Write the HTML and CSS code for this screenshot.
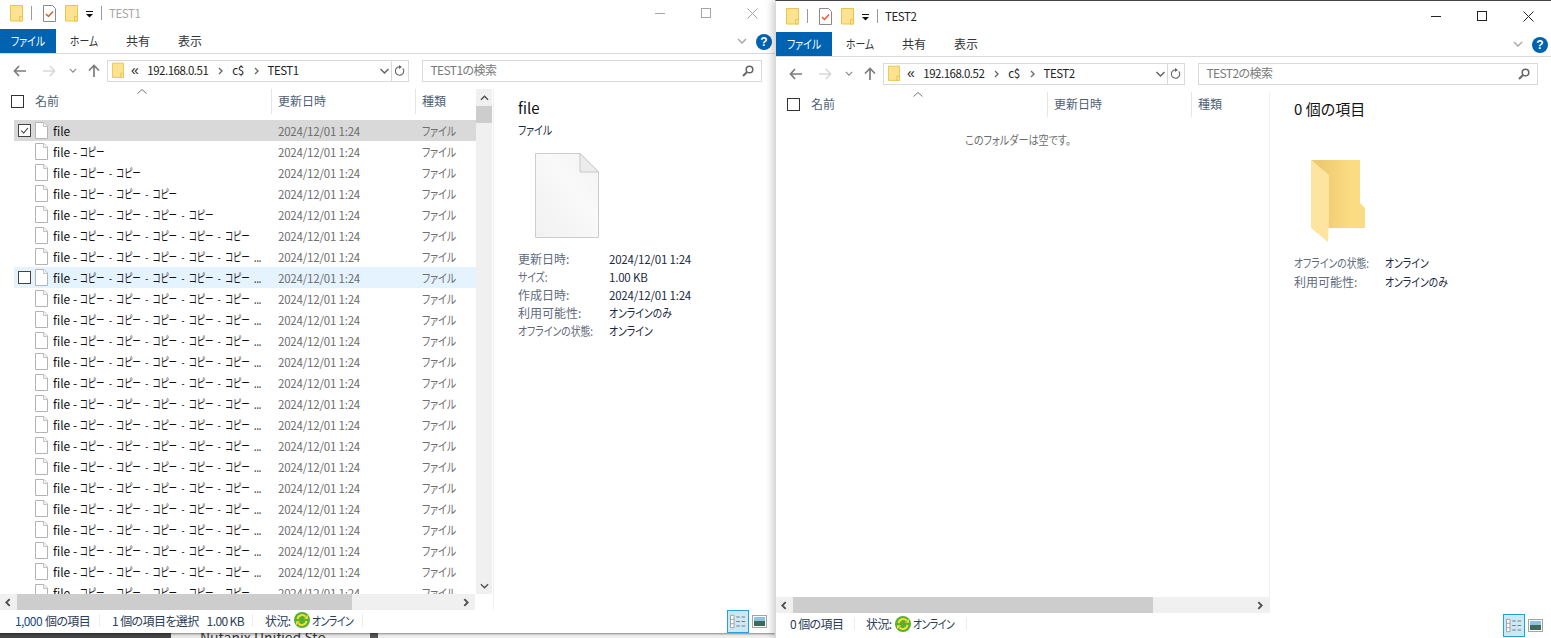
FILE: index.html
```html
<!DOCTYPE html>
<html lang="ja">
<head>
<meta charset="utf-8">
<title>TEST1 / TEST2</title>
<link rel="stylesheet" href="styles.css">
</head>
<body>
<svg class="defs" width="0" height="0">
  <defs>
    <linearGradient id="fg" x1="0" x2="1" y1="0" y2="0"><stop offset="0.2" stop-color="#edcb72"/><stop offset="0.75" stop-color="#fcdc82"/></linearGradient>
    <linearGradient id="pg" x1="0" x2="1" y1="1" y2="0"><stop offset="0" stop-color="#f1f1f1"/><stop offset="0.6" stop-color="#f9f9f9"/><stop offset="1" stop-color="#f3f3f3"/></linearGradient>
    <symbol id="folder" viewBox="0 0 13 17"><path d="M.5.5h12v15.500H.5z" fill="#fde28f" stroke="#eac44c"/><path d="M9.500 16V11.500h3V16z" fill="#fde28f" stroke="#eac44c"/></symbol>
    <symbol id="doc" viewBox="0 0 13 17"><path d="M.5.5H9L12.500 4V16.500H.5z" fill="#fff" stroke="#b4b4b4"/><path d="M8.500.5V4.500H12.500" fill="#f2f2f2" stroke="#c4c4c4"/></symbol>
    <symbol id="chev" viewBox="0 0 10 6"><path d="M1 1l4 4 4-4" fill="none" stroke="currentColor" stroke-width="1.5"/></symbol>
    <symbol id="crumb" viewBox="0 0 5 8"><path d="M1 1l3 3-3 3" fill="none" stroke="currentColor"/></symbol>
    <symbol id="online" viewBox="0 0 16 16"><circle cx="8" cy="8" r="8" fill="#58b02f"/><path d="M3.600 7.200A4.600 4.600 0 0 1 11.600 4.600" fill="none" stroke="#f2de3a" stroke-width="2"/><path d="M10 6.800h4V2.800z" fill="#f2de3a"/><path d="M12.400 8.800A4.600 4.600 0 0 1 4.400 11.400" fill="none" stroke="#f2de3a" stroke-width="2"/><path d="M6 9.200H2v4z" fill="#f2de3a"/></symbol>
    <symbol id="details" viewBox="0 0 20 17"><path d="M1.500 1.500h4v14h-4zM1.500 6h4M1.500 11h4" fill="#fff" stroke="#9a9a9a"/><path d="M8 3.500h4M14 3.500h4M8 8.500h4M14 8.500h4M8 13.500h4M14 13.500h4" stroke="#7a7a7a" stroke-width="1.2"/></symbol>
    <symbol id="photo" viewBox="0 0 15 13"><rect x=".5" y=".5" width="14" height="12" fill="#fff" stroke="#a4a4a4"/><rect x="2" y="2" width="11" height="4" fill="#8cc3e6"/><rect x="2" y="6" width="11" height="5" fill="#3f6a5a"/></symbol>
    <symbol id="quick" viewBox="0 0 13 17"><path d="M.5.5H9.500L12.500 3.500V16.500H.5z" fill="#fff" stroke="#8a8a8a"/><path d="M3 9l2.500 2.500L10 6.500" fill="none" stroke="#e8562a" stroke-width="1.500"/></symbol>
    <symbol id="mag" viewBox="0 0 12 12"><circle cx="7.500" cy="4.500" r="3.300" fill="none" stroke="#666" stroke-width="1.500"/><path d="M5 7L1 11" stroke="#666" stroke-width="2"/></symbol>
    <symbol id="back" viewBox="0 0 13 12"><path d="M6 1L1.500 6 6 11M2 6h11" fill="none" stroke="currentColor" stroke-width="1.700"/></symbol>
    <symbol id="up" viewBox="0 0 12 13"><path d="M1 6.500L6 1.500l5 5M6 2v11" fill="none" stroke="currentColor" stroke-width="1.700"/></symbol>
    <symbol id="refresh" viewBox="0 0 11 12"><path d="M8.800 3.300A4.200 4.200 0 1 1 5.500 1.800" fill="none" stroke="#666" stroke-width="1.100"/><path d="M5 0v4l3-2z" fill="#666"/></symbol>
    <symbol id="qat" viewBox="0 0 7 7"><path d="M0 .5h7" stroke="#111"/><path d="M0 3h7L3.500 6.500z" fill="#111"/></symbol>
    <symbol id="tick" viewBox="0 0 13 13"><path d="M2.500 6.500l3 3 5-6" fill="none" stroke="#333" stroke-width="1.200"/></symbol>
  </defs>
</svg>

<main class="desktop">
  <div class="behind">
    <div class="behind-dark"></div>
    <div class="behind-tab">Nutanix Unified Sto...</div>
    <div class="behind-bar"></div>
    <div class="behind-rest"></div>
  </div>

  <section class="window win-one">
    <header class="title">
      <svg class="qa-folder"><use href="#folder"/></svg><i class="qa-sep"></i>
      <svg class="qa-check"><use href="#quick"/></svg>
      <svg class="qa-folder qa-second"><use href="#folder"/></svg>
      <svg class="qa-arrow"><use href="#qat"/></svg><i class="qa-sep qa-sep2"></i>
      <span class="title-text">TEST1</span>
      <div class="controls">
        <span class="ctl"><i class="ctl-min"></i></span>
        <span class="ctl"><i class="ctl-max"></i></span>
        <span class="ctl"><svg class="ctl-x" viewBox="0 0 11 11"><path d="M.5.5l10 10M10.500.5l-10 10" stroke="currentColor"/></svg></span>
      </div>
    </header>
    <nav class="tabs">
      <span class="tab tab-file"><span class="k">ファイル</span></span><span class="tab tab-home"><span class="k">ホーム</span></span><span class="tab">共有</span><span class="tab">表示</span>
      <svg class="ribbon-chev"><use href="#chev"/></svg>
      <span class="help">?</span>
    </nav>
    <div class="nav">
      <svg class="nav-back"><use href="#back"/></svg>
      <svg class="nav-fwd"><use href="#back"/></svg>
      <svg class="nav-down"><use href="#chev"/></svg>
      <svg class="nav-up"><use href="#up"/></svg>
      <div class="addr">
        <svg class="addr-folder"><use href="#folder"/></svg>
        <span class="addr-more">«</span>
        <span>192.168.0.51</span>
        <svg class="crumb"><use href="#crumb"/></svg>
        <span>c$</span>
        <svg class="crumb"><use href="#crumb"/></svg>
        <span>TEST1</span>
        <svg class="addr-chev"><use href="#chev"/></svg>
      </div>
      <div class="refresh"><svg><use href="#refresh"/></svg></div>
      <div class="search"><span>TEST1の検索</span><svg><use href="#mag"/></svg></div>
    </div>
    <div class="body">
      <div class="pane">
        <div class="pane-top">
          <div class="main">
            <div class="head">
              <i class="box head-box"></i>
              <span class="head-name">名前</span>
              <svg class="sort" viewBox="0 0 10 5"><path d="M.5 4.500L5 .5l4.500 4" fill="none" stroke="#777"/></svg>
              <span class="head-date">更新日時</span>
              <span class="head-type">種類</span>
            </div>
            <div class="rows">
              <div class="row row-sel"><i class="box row-box"><svg><use href="#tick"/></svg></i><svg class="doc"><use href="#doc"/></svg><span class="nm">file</span><span class="dt">2024/12/01 1:24</span><span class="ty">ファイル</span></div>
              <div class="row"><i class="row-gap"></i><svg class="doc"><use href="#doc"/></svg><span class="nm">file - <span class="cp">コピー</span></span><span class="dt">2024/12/01 1:24</span><span class="ty">ファイル</span></div>
              <div class="row"><i class="row-gap"></i><svg class="doc"><use href="#doc"/></svg><span class="nm">file - <span class="cp">コピー - コピー</span></span><span class="dt">2024/12/01 1:24</span><span class="ty">ファイル</span></div>
              <div class="row"><i class="row-gap"></i><svg class="doc"><use href="#doc"/></svg><span class="nm">file - <span class="cp">コピー - コピー - コピー</span></span><span class="dt">2024/12/01 1:24</span><span class="ty">ファイル</span></div>
              <div class="row"><i class="row-gap"></i><svg class="doc"><use href="#doc"/></svg><span class="nm">file - <span class="cp">コピー - コピー - コピー - コピー</span></span><span class="dt">2024/12/01 1:24</span><span class="ty">ファイル</span></div>
              <div class="row"><i class="row-gap"></i><svg class="doc"><use href="#doc"/></svg><span class="nm">file - <span class="cp">コピー - コピー - コピー - コピー - コピー</span></span><span class="dt">2024/12/01 1:24</span><span class="ty">ファイル</span></div>
              <div class="row"><i class="row-gap"></i><svg class="doc"><use href="#doc"/></svg><span class="nm">file - <span class="cp">コピー - コピー - コピー - コピー - コピー ...</span></span><span class="dt">2024/12/01 1:24</span><span class="ty">ファイル</span></div>
              <div class="row row-hover"><i class="box row-box"></i><svg class="doc"><use href="#doc"/></svg><span class="nm">file - <span class="cp">コピー - コピー - コピー - コピー - コピー ...</span></span><span class="dt">2024/12/01 1:24</span><span class="ty">ファイル</span></div>
              <div class="row"><i class="row-gap"></i><svg class="doc"><use href="#doc"/></svg><span class="nm">file - <span class="cp">コピー - コピー - コピー - コピー - コピー ...</span></span><span class="dt">2024/12/01 1:24</span><span class="ty">ファイル</span></div>
              <div class="row"><i class="row-gap"></i><svg class="doc"><use href="#doc"/></svg><span class="nm">file - <span class="cp">コピー - コピー - コピー - コピー - コピー ...</span></span><span class="dt">2024/12/01 1:24</span><span class="ty">ファイル</span></div>
              <div class="row"><i class="row-gap"></i><svg class="doc"><use href="#doc"/></svg><span class="nm">file - <span class="cp">コピー - コピー - コピー - コピー - コピー ...</span></span><span class="dt">2024/12/01 1:24</span><span class="ty">ファイル</span></div>
              <div class="row"><i class="row-gap"></i><svg class="doc"><use href="#doc"/></svg><span class="nm">file - <span class="cp">コピー - コピー - コピー - コピー - コピー ...</span></span><span class="dt">2024/12/01 1:24</span><span class="ty">ファイル</span></div>
              <div class="row"><i class="row-gap"></i><svg class="doc"><use href="#doc"/></svg><span class="nm">file - <span class="cp">コピー - コピー - コピー - コピー - コピー ...</span></span><span class="dt">2024/12/01 1:24</span><span class="ty">ファイル</span></div>
              <div class="row"><i class="row-gap"></i><svg class="doc"><use href="#doc"/></svg><span class="nm">file - <span class="cp">コピー - コピー - コピー - コピー - コピー ...</span></span><span class="dt">2024/12/01 1:24</span><span class="ty">ファイル</span></div>
              <div class="row"><i class="row-gap"></i><svg class="doc"><use href="#doc"/></svg><span class="nm">file - <span class="cp">コピー - コピー - コピー - コピー - コピー ...</span></span><span class="dt">2024/12/01 1:24</span><span class="ty">ファイル</span></div>
              <div class="row"><i class="row-gap"></i><svg class="doc"><use href="#doc"/></svg><span class="nm">file - <span class="cp">コピー - コピー - コピー - コピー - コピー ...</span></span><span class="dt">2024/12/01 1:24</span><span class="ty">ファイル</span></div>
              <div class="row"><i class="row-gap"></i><svg class="doc"><use href="#doc"/></svg><span class="nm">file - <span class="cp">コピー - コピー - コピー - コピー - コピー ...</span></span><span class="dt">2024/12/01 1:24</span><span class="ty">ファイル</span></div>
              <div class="row"><i class="row-gap"></i><svg class="doc"><use href="#doc"/></svg><span class="nm">file - <span class="cp">コピー - コピー - コピー - コピー - コピー ...</span></span><span class="dt">2024/12/01 1:24</span><span class="ty">ファイル</span></div>
              <div class="row"><i class="row-gap"></i><svg class="doc"><use href="#doc"/></svg><span class="nm">file - <span class="cp">コピー - コピー - コピー - コピー - コピー ...</span></span><span class="dt">2024/12/01 1:24</span><span class="ty">ファイル</span></div>
              <div class="row"><i class="row-gap"></i><svg class="doc"><use href="#doc"/></svg><span class="nm">file - <span class="cp">コピー - コピー - コピー - コピー - コピー ...</span></span><span class="dt">2024/12/01 1:24</span><span class="ty">ファイル</span></div>
              <div class="row"><i class="row-gap"></i><svg class="doc"><use href="#doc"/></svg><span class="nm">file - <span class="cp">コピー - コピー - コピー - コピー - コピー ...</span></span><span class="dt">2024/12/01 1:24</span><span class="ty">ファイル</span></div>
              <div class="row"><i class="row-gap"></i><svg class="doc"><use href="#doc"/></svg><span class="nm">file - <span class="cp">コピー - コピー - コピー - コピー - コピー ...</span></span><span class="dt">2024/12/01 1:24</span><span class="ty">ファイル</span></div>
              <div class="row"><i class="row-gap"></i><svg class="doc"><use href="#doc"/></svg><span class="nm">file - <span class="cp">コピー - コピー - コピー - コピー - コピー ...</span></span><span class="dt">2024/12/01 1:24</span><span class="ty">ファイル</span></div>
            </div>
          </div>
          <div class="vscroll">
            <svg class="vs-up"><use href="#chev"/></svg>
            <i class="vs-thumb"></i>
            <svg class="vs-down"><use href="#chev"/></svg>
          </div>
        </div>
        <div class="hscroll hs-one">
          <svg class="hs-l"><use href="#crumb"/></svg>
          <i class="hs-thumb hs-thumb-one"></i>
          <svg class="hs-r"><use href="#crumb"/></svg>
        </div>
      </div>
      <aside class="preview">
        <h2 class="pv-title">file</h2>
        <div class="pv-sub"><span class="k">ファイル</span></div>
        <svg class="pv-doc" viewBox="0 0 64 85"><path d="M.5.5H45L63.500 19V84.500H.5z" fill="url(#pg)" stroke="#cdcdcd"/><path d="M45 .5V19H63.500z" fill="#ececec" stroke="#c8c8c8"/></svg>
        <dl class="props">
          <dt>更新日時:</dt><dd class="num">2024/12/01 1:24</dd>
          <dt><span class="k">サイズ:</span></dt><dd class="num">1.00 KB</dd>
          <dt>作成日時:</dt><dd class="num">2024/12/01 1:24</dd>
          <dt>利用可能性:</dt><dd><span class="k">オンラインのみ</span></dd>
          <dt><span class="k">オフラインの状態:</span></dt><dd><span class="k">オンライン</span></dd>
        </dl>
      </aside>
    </div>
    <footer class="status">
      <span class="st st-count"><b>1,000</b> 個の項目</span>
      <span class="st st-sel">1 個の項目を選択<em>1.00 KB</em></span>
      <span class="st st-online">状況:<svg class="ol"><use href="#online"/></svg><span class="k">オンライン</span></span>
      <div class="views">
        <span class="view-on"><svg><use href="#details"/></svg></span>
        <svg class="view-off"><use href="#photo"/></svg>
      </div>
    </footer>
  </section>

  <section class="window win-two">
    <header class="title">
      <svg class="qa-folder"><use href="#folder"/></svg><i class="qa-sep"></i>
      <svg class="qa-check"><use href="#quick"/></svg>
      <svg class="qa-folder qa-second"><use href="#folder"/></svg>
      <svg class="qa-arrow"><use href="#qat"/></svg><i class="qa-sep qa-sep2"></i>
      <span class="title-text">TEST2</span>
      <div class="controls">
        <span class="ctl"><i class="ctl-min"></i></span>
        <span class="ctl"><i class="ctl-max"></i></span>
        <span class="ctl"><svg class="ctl-x" viewBox="0 0 11 11"><path d="M.5.5l10 10M10.500.5l-10 10" stroke="currentColor"/></svg></span>
      </div>
    </header>
    <nav class="tabs">
      <span class="tab tab-file"><span class="k">ファイル</span></span><span class="tab tab-home"><span class="k">ホーム</span></span><span class="tab">共有</span><span class="tab">表示</span>
      <svg class="ribbon-chev"><use href="#chev"/></svg>
      <span class="help">?</span>
    </nav>
    <div class="nav">
      <svg class="nav-back"><use href="#back"/></svg>
      <svg class="nav-fwd"><use href="#back"/></svg>
      <svg class="nav-down"><use href="#chev"/></svg>
      <svg class="nav-up"><use href="#up"/></svg>
      <div class="addr">
        <svg class="addr-folder"><use href="#folder"/></svg>
        <span class="addr-more">«</span>
        <span>192.168.0.52</span>
        <svg class="crumb"><use href="#crumb"/></svg>
        <span>c$</span>
        <svg class="crumb"><use href="#crumb"/></svg>
        <span>TEST2</span>
        <svg class="addr-chev"><use href="#chev"/></svg>
      </div>
      <div class="refresh"><svg><use href="#refresh"/></svg></div>
      <div class="search"><span>TEST2の検索</span><svg><use href="#mag"/></svg></div>
    </div>
    <div class="body">
      <div class="pane">
        <div class="pane-top">
          <div class="main">
            <div class="head">
              <i class="box head-box"></i>
              <span class="head-name">名前</span>
              <svg class="sort" viewBox="0 0 10 5"><path d="M.5 4.500L5 .5l4.500 4" fill="none" stroke="#777"/></svg>
              <span class="head-date">更新日時</span>
              <span class="head-type">種類</span>
            </div>
            <p class="empty"><span class="empty-text">このフォルダーは空です。</span></p>
          </div>
        </div>
        <div class="hscroll">
          <svg class="hs-l"><use href="#crumb"/></svg>
          <i class="hs-thumb hs-thumb-two"></i>
          <svg class="hs-r"><use href="#crumb"/></svg>
        </div>
      </div>
      <aside class="preview">
        <h2 class="pv-title">0 個の項目</h2>
        <svg class="pv-folder" viewBox="0 0 56 82"><path d="M0 0H49V43L54 48V68H17V15z" fill="url(#fg)"/><path d="M0 0L18 15V58L17 82L0 68z" fill="#fde59f"/></svg>
        <dl class="props props-two">
          <dt><span class="k">オフラインの状態:</span></dt><dd><span class="k">オンライン</span></dd>
          <dt>利用可能性:</dt><dd><span class="k">オンラインのみ</span></dd>
        </dl>
      </aside>
    </div>
    <footer class="status">
      <span class="st st-count">0 個の項目</span>
      <span class="st st-online">状況:<svg class="ol"><use href="#online"/></svg><span class="k">オンライン</span></span>
      <div class="views">
        <span class="view-on"><svg><use href="#details"/></svg></span>
        <svg class="view-off"><use href="#photo"/></svg>
      </div>
    </footer>
  </section>
</main>
</body>
</html>
```

FILE: styles.css
```css
* { box-sizing: border-box; }
html, body { margin: 0; padding: 0; background: #fff; }
body {
  font-family: "Noto Sans CJK JP", "Noto Sans", sans-serif;
  font-size: 12px;
  font-feature-settings: "palt";
  color: #1b1b1b;
  overflow: hidden;
}
.defs { position: absolute; }
svg { display: block; flex: none; }
i { display: block; flex: none; font-style: normal; }

/* Meiryo UI style narrow kana */
.k { display: inline-block; white-space: nowrap; transform: scaleX(.82); transform-origin: 0 50%; }
.cp { display: inline-block; white-space: nowrap; word-spacing: 3.6px; transform: scaleX(.71); transform-origin: 0 50%; }

.desktop { position: relative; width: 1551px; height: 638px; overflow: hidden; }

.behind { position: absolute; left: 0; right: 0; top: 633px; height: 5px; display: flex; }
.behind-dark { width: 171px; background: #444; }
.behind-tab { width: 199px; background: #e6e6e6; color: #333; font-size: 14px; line-height: 8px; padding-left: 29px; white-space: nowrap; overflow: hidden; }
.behind-bar { width: 8px; background: #555; }
.behind-rest { flex: 1; background: #eee; }

.window { position: absolute; top: 0; display: flex; flex-direction: column; background: #fff; }
.win-one { left: 0; width: 775px; height: 633px; box-shadow: 0 1px 2px rgba(0,0,0,.45); --title: 29px; --title-pb: 3px; --status: 23px; --muted: #a5a5a5; }
.win-two { left: 775px; width: 776px; height: 638px; border-left: 1px solid #d8d8d8; border-top: 1px solid #444; box-shadow: -3px 0 7px rgba(0,0,0,.18); --title: 31px; --title-pb: 1px; --status: 25px; --muted: #222; }

/* title bar */
.title { height: var(--title); flex: none; display: flex; align-items: center; padding: 0 0 var(--title-pb) 10px; color: var(--muted); }
.qa-folder { width: 13px; height: 17px; }
.qa-sep { width: 1px; height: 14px; background: #9a9a9a; margin: 0 11px 0 8px; }
.qa-check { width: 13px; height: 17px; }
.qa-second { margin-left: 9px; }
.qa-arrow { width: 7px; height: 7px; margin-left: 8px; margin-top: 3px; }
.qa-sep2 { margin: 0 7px 0 8px; }
.title-text { font-size: 11.5px; letter-spacing: -.4px; }
.controls { margin-left: auto; display: flex; height: 100%; }
.ctl { width: 46px; display: flex; align-items: center; justify-content: center; color: var(--muted); }
.ctl-min { width: 10px; height: 1px; background: currentColor; }
.ctl-max { width: 10px; height: 10px; border: 1px solid currentColor; }
.ctl-x { width: 11px; height: 11px; }

/* ribbon tabs */
.tabs { height: 25px; flex: none; display: flex; align-items: stretch; border-bottom: 1px solid #dadada; }
.tab { display: flex; align-items: center; padding: 0 14px 2px; color: #333; white-space: nowrap; }
.tab-file { width: 56px; padding: 0 0 2px 11px; background: #0063b1; color: #fff; height: 24px; }
.tab-home { width: 56px; }
.ribbon-chev { width: 10px; height: 6px; margin: 9px 0 0 auto; color: #a9a9a9; }
.help { width: 16px; height: 16px; margin: 5px 3px 0 9px; border-radius: 50%; background: #0063b1; color: #fff; font: bold 12px/16px "Liberation Sans", sans-serif; text-align: center; }

/* address row */
.nav { height: 35px; flex: none; display: flex; align-items: center; padding: 0 13px 2px 13px; }
.nav-back { width: 13px; height: 12px; color: #7c7c7c; }
.nav-fwd { width: 13px; height: 12px; color: #d8d8d8; margin-left: 17px; transform: scaleX(-1); }
.nav-down { width: 8px; height: 5px; color: #8a8a8a; margin-left: 13px; }
.nav-up { width: 12px; height: 13px; color: #7c7c7c; margin-left: 11px; }
.addr { width: 285px; height: 22px; margin-left: 7px; border: 1px solid #d9d9d9; display: flex; align-items: center; padding: 0 0 2px 4px; color: #222; font-size: 11.5px; letter-spacing: -.5px; white-space: nowrap; }
.addr-folder { width: 12px; height: 17px; margin-top: 2px; }
.addr-more { margin-left: 7px; margin-right: 9px; font: 14px/1 "Liberation Sans", sans-serif; }
.crumb { width: 5px; height: 8px; margin: 2px 9px 0 10px; color: #6a6a6a; stroke-width: 1.4; }
.addr-chev { width: 11px; height: 6px; margin: 2px 1px 0 auto; color: #666; }
.refresh { width: 17px; height: 22px; border: 1px solid #d9d9d9; border-left: 0; display: flex; align-items: center; justify-content: center; }
.refresh svg { width: 11px; height: 12px; }
.search { width: 341px; height: 22px; margin-left: 13px; border: 1px solid #d9d9d9; display: flex; align-items: center; justify-content: space-between; padding: 0 7px 2px 8px; color: #7a7a7a; letter-spacing: -.6px; }
.search svg { width: 12px; height: 12px; margin-top: 2px; }

/* body */
.body { flex: 1; min-height: 0; display: flex; }
.pane { width: 494px; border-right: 1px solid #f0f0f0; display: flex; flex-direction: column; flex: none; }
.pane-top { flex: 1; min-height: 0; display: flex; }
.main { width: 476px; flex: none; display: flex; flex-direction: column; }
.head { height: 31px; flex: none; display: flex; align-items: flex-start; position: relative; color: #4e5f74; }
.box { width: 13px; height: 13px; border: 1px solid #333; background: #fff; }
.head-box { margin: 6px 0 0 11px; }
.head-name { margin: 3px 0 0 11px; width: 236px; }
.head-date, .head-type { height: 25px; border-left: 1px solid #e5e5e5; padding: 3px 0 0 6px; }
.head-date { width: 144px; }
.head-type { flex: 1; }
.sort { position: absolute; left: 137px; top: 0; width: 10px; height: 5px; }
.rows { flex: 1; min-height: 0; overflow: hidden; }
.row { height: 21px; margin-left: 14px; display: flex; align-items: center; padding-left: 4px; }
.row-sel { background: #d9d9d9; }
.row-hover { background: #e5f3ff; }
.row-box { border-color: #444; }
.row-box svg { width: 11px; height: 11px; }
.row-gap { width: 13px; }
.doc { width: 13px; height: 17px; margin-left: 4px; }
.nm { width: 225px; margin-left: 5px; color: #111; white-space: nowrap; overflow: hidden; }
.dt { width: 144px; color: #6d6d6d; font-size: 11.5px; letter-spacing: -.2px; white-space: nowrap; }
.ty { color: #6d6d6d; transform: scaleX(.82); transform-origin: 0 50%; white-space: nowrap; }
.empty { margin: 8px 0 0; text-align: center; color: #6d6d6d; padding-left: 9px; }
.empty-text { display: inline-block; white-space: nowrap; transform: scaleX(.84); }

/* scrollbars */
.vscroll { width: 16px; flex: none; background: #f0f0f0; position: relative; display: flex; flex-direction: column; align-items: center; }
.vs-up { width: 9px; height: 6px; margin: 6px 0 5px; transform: scaleY(-1); color: #505050; }
.vs-thumb { width: 16px; height: 17px; background: #cdcdcd; }
.vs-down { width: 9px; height: 6px; margin-top: auto; margin-bottom: 5px; color: #505050; }
.hscroll { height: 16px; flex: none; background: #f0f0f0; display: flex; align-items: center; color: #505050; stroke-width: 1.7; }
.hs-one { width: 475px; }
.hs-l { width: 6px; height: 9px; margin: 0 5px; transform: scaleX(-1); }
.hs-thumb { height: 16px; background: #cdcdcd; }
.hs-thumb-one { width: 335px; margin-left: 1px; }
.hs-thumb-two { width: 360px; margin-left: 1px; }
.hs-r { width: 6px; height: 9px; margin-left: auto; margin-right: 6px; }

/* preview */
.preview { flex: 1; padding: 8px 0 0 24px; }
.win-two .preview { padding-top: 6px; }
.pv-title { margin: 0; font-size: 15px; font-weight: 400; line-height: 22px; color: #111; }
.pv-sub { margin-top: 1px; line-height: 20px; color: #1b2a40; }
.pv-doc { width: 64px; height: 85px; margin: 13px 0 0 17px; }
.pv-folder { width: 56px; height: 82px; margin: 40px 0 0 17px; }
.props { margin: 12px 0 0; display: grid; grid-template-columns: 91px 1fr; grid-auto-rows: 18px; line-height: 18px; }
.props dt { color: #5f6b7c; white-space: nowrap; }
.props dd { margin: 0; color: #1b2a40; white-space: nowrap; }
.props .num { font-size: 11.5px; letter-spacing: -.2px; }
.props-two { margin-top: 12px; grid-auto-rows: 19px; }

/* status bar */
.status { height: var(--status); flex: none; display: flex; align-items: center; color: #2b3d57; }
.st { display: flex; align-items: center; height: 13px; margin-bottom: 3px; border-right: 1px solid #ededed; white-space: nowrap; letter-spacing: -.6px; }
.win-two .st { margin-bottom: 4px; }
.st b { font-weight: 400; color: #174a8c; margin-right: 3px; }
.st em { font-style: normal; margin-left: 8px; }
.st-count { width: 100px; padding-left: 15px; }
.st-sel { width: 153px; padding-left: 12px; }
.st-online { width: 110px; padding-left: 12px; }
.win-two .st-count { width: 79px; padding-left: 14px; }
.win-two .st-online { width: 112px; padding-left: 11px; }
.ol { width: 16px; height: 16px; margin: 0 2px 0 3px; }
.views { margin-left: auto; display: flex; align-items: center; padding-right: 8px; height: 100%; }
.view-on { width: 22px; height: 23px; border: 1px solid #26a0da; background: #cbe8f6; display: flex; align-items: center; justify-content: center; }
.view-on svg { width: 18px; height: 15px; }
.view-off { width: 15px; height: 13px; margin-left: 3px; }
```
